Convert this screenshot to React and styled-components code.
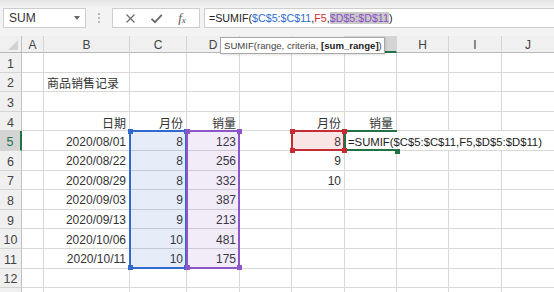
import React from 'react';
import styled, { createGlobalStyle } from 'styled-components';

const COLS = [22, 22, 86, 57, 53, 52, 53, 52, 52, 53, 53];
const LETTERS = ['', 'A', 'B', 'C', 'D', 'E', 'F', 'G', 'H', 'I', 'J'];
const HIDDEN_HEADERS = ['E', 'F', 'G'];
const HEADER_H = 17;
const ROW_H = 19.6;
const ROW_COUNT = 13;

const colLeft = (i) => COLS.slice(0, i).reduce((a, b) => a + b, 0);
const colIdx = (letter) => LETTERS.indexOf(letter);
const rowTop = (r) => HEADER_H + (r - 1) * ROW_H;

const DATA = {
  2: { B: { v: '商品销售记录', a: 'left' } },
  4: { B: { v: '日期' }, C: { v: '月份' }, D: { v: '销量' }, F: { v: '月份' }, G: { v: '销量' } },
  5: { B: { v: '2020/08/01' }, C: { v: '8' }, D: { v: '123' }, F: { v: '8' } },
  6: { B: { v: '2020/08/22' }, C: { v: '8' }, D: { v: '256' }, F: { v: '9' } },
  7: { B: { v: '2020/08/29' }, C: { v: '8' }, D: { v: '332' }, F: { v: '10' } },
  8: { B: { v: '2020/09/03' }, C: { v: '9' }, D: { v: '387' } },
  9: { B: { v: '2020/09/13' }, C: { v: '9' }, D: { v: '213' } },
  10: { B: { v: '2020/10/06' }, C: { v: '10' }, D: { v: '481' } },
  11: { B: { v: '2020/10/11' }, C: { v: '10' }, D: { v: '175' } },
};

const GlobalStyle = createGlobalStyle`
  html, body { margin: 0; padding: 0; background: #ffffff; overflow: hidden; }
  body { font-family: "Liberation Sans", "Noto Sans CJK SC", sans-serif; }
  * { box-sizing: border-box; }
`;

const Page = styled.div`
  width: 554px;
  height: 292px;
  overflow: hidden;
  display: flex;
  flex-direction: column;
`;

/* ---------- Formula toolbar ---------- */
const Toolbar = styled.div`
  height: 36px;
  flex: 0 0 36px;
  display: flex;
  align-items: center;
  padding: 0 0 0 3px;
  background: linear-gradient(#e4e4e4 0px, #ececec 4px, #f3f3f3 8px, #f3f3f3 100%);
`;

const NameBox = styled.div`
  width: 83px;
  height: 20px;
  background: #fff;
  border: 1px solid #cdcdcd;
  display: flex;
  align-items: center;
  justify-content: space-between;
  padding: 0 5px 0 5px;
  font-size: 12px;
  color: #333;
`;

const DropArrow = styled.span`
  width: 0;
  height: 0;
  border-left: 3.5px solid transparent;
  border-right: 3.5px solid transparent;
  border-top: 4px solid #666;
`;

const Grip = styled.div`
  width: 26px;
  display: flex;
  flex-direction: column;
  align-items: center;
  gap: 2px;
  span {
    width: 2px;
    height: 2px;
    background: #b8b8b8;
  }
`;

const ButtonGroup = styled.div`
  width: 88px;
  height: 20px;
  background: #fff;
  border: 1px solid #cdcdcd;
  display: flex;
  align-items: center;
  justify-content: space-around;
  padding: 0 4px;
`;

const IconBtn = styled.span`
  width: 22px;
  display: flex;
  align-items: center;
  justify-content: center;
  color: #6a6a6a;
`;

const Fx = styled.span`
  font-family: "Liberation Serif", serif;
  font-style: italic;
  font-size: 13px;
  color: #555;
  sub {
    font-size: 9px;
    vertical-align: -1px;
  }
`;

const FormulaInput = styled.div`
  margin-left: 4px;
  flex: 1;
  height: 20px;
  background: #fff;
  border: 1px solid #cdcdcd;
  border-right: none;
  display: flex;
  align-items: center;
  padding-left: 4px;
  font-size: 10.7px;
  color: #222;
  white-space: nowrap;
`;

const Ref = styled.span`
  color: ${(p) => p.$color};
  background: ${(p) => (p.$sel ? '#c9c9c9' : 'transparent')};
`;

/* ---------- Sheet ---------- */
const Sheet = styled.div`
  position: relative;
  flex: 1;
  overflow: hidden;
`;

const Grid = styled.div`
  display: grid;
  grid-template-columns: ${COLS.map((c) => c + 'px').join(' ')};
  grid-template-rows: ${HEADER_H}px repeat(${ROW_COUNT}, ${ROW_H}px);
  width: max-content;
`;

const Corner = styled.div`
  background: #f0f0f0;
  border-right: 1px solid #c0c0c0;
  border-bottom: 1px solid #b8b8b8;
  position: relative;
  &::after {
    content: '';
    position: absolute;
    right: 3px;
    bottom: 2px;
    width: 0;
    height: 0;
    border-left: 10px solid transparent;
    border-bottom: 10px solid #d2d2d2;
  }
`;

const ColHeader = styled.div`
  background: ${(p) => (p.$active ? '#d4d4d4' : '#f0f0f0')};
  border-right: 1px solid #d4d4d4;
  border-bottom: ${(p) => (p.$active ? '2px solid #217346' : '1px solid #b8b8b8')};
  display: flex;
  align-items: center;
  justify-content: center;
  font-size: 12px;
  color: ${(p) => (p.$active ? '#217346' : '#444')};
  padding-top: 1px;
`;

const RowHeader = styled.div`
  background: ${(p) => (p.$active ? '#d4d4d4' : '#f0f0f0')};
  border-right: ${(p) => (p.$active ? '2px solid #217346' : '1px solid #c0c0c0')};
  border-bottom: 1px solid #d4d4d4;
  display: flex;
  align-items: center;
  justify-content: center;
  font-size: 12.5px;
  color: ${(p) => (p.$active ? '#217346' : '#444')};
  padding-top: 3px;
`;

const Cell = styled.div`
  border-right: 1px solid #d8d8d8;
  border-bottom: 1px solid #d8d8d8;
  display: flex;
  align-items: center;
  justify-content: ${(p) => (p.$align === 'left' ? 'flex-start' : 'flex-end')};
  padding: 2px 3px 0 3px;
  font-size: 12px;
  color: #333;
  white-space: nowrap;
  overflow: visible;
`;

const Range = styled.div.attrs((p) => ({
  style: { left: p.$x, top: p.$y, width: p.$w, height: p.$h },
}))`
  position: absolute;
  border: 2px solid ${(p) => p.$color};
  background: ${(p) => p.$fill};
  pointer-events: none;
`;

const Handle = styled.div.attrs((p) => ({
  style: { left: p.$x - 2.5, top: p.$y - 2.5 },
}))`
  position: absolute;
  width: 5px;
  height: 5px;
  background: ${(p) => p.$color};
  z-index: 3;
`;

const EditCell = styled.div.attrs((p) => ({
  style: { left: p.$x, top: p.$y, height: p.$h },
}))`
  position: absolute;
  right: 0;
  background: #fff;
  display: flex;
  align-items: center;
  padding: 2px 0 0 3px;
  font-size: 11.3px;
  color: #222;
  white-space: nowrap;
  z-index: 2;
`;

const ActiveBorder = styled.div.attrs((p) => ({
  style: { left: p.$x, top: p.$y, width: p.$w, height: p.$h },
}))`
  position: absolute;
  border-top: 2px solid #217346;
  border-bottom: 2px solid #217346;
  border-left: 2px solid #217346;
  z-index: 2;
`;

const Tooltip = styled.div`
  position: absolute;
  left: 220px;
  top: 1px;
  height: 17px;
  width: 165px;
  background: #fff;
  border: 1px solid #a8a8a8;
  box-shadow: 1px 1px 2px rgba(0, 0, 0, 0.12);
  display: flex;
  align-items: center;
  padding-left: 3px;
  font-size: 9.6px;
  color: #444;
  white-space: nowrap;
  overflow: hidden;
  z-index: 5;
  b { color: #222; }
`;

function RangeBox({ col, r1, r2, color, fill }) {
  const i = colIdx(col);
  const x = colLeft(i) - 1;
  const y = rowTop(r1) - 1;
  const w = COLS[i] + 1;
  const h = (r2 - r1 + 1) * ROW_H + 1;
  const xs = [x + 1, x + w - 1];
  const ys = [y + 1, y + h - 1];
  return (
    <>
      <Range $x={x} $y={y} $w={w} $h={h} $color={color} $fill={fill} />
      {xs.map((hx) => ys.map((hy) => <Handle key={`${hx}-${hy}`} $x={hx} $y={hy} $color={color} />))}
    </>
  );
}

const XIcon = () => (
  <svg width="11" height="11" viewBox="0 0 11 11">
    <path d="M1.5 1.5 L9.5 9.5 M9.5 1.5 L1.5 9.5" stroke="#6a6a6a" strokeWidth="1.2" fill="none" />
  </svg>
);

const CheckIcon = () => (
  <svg width="13" height="11" viewBox="0 0 13 11">
    <path d="M1.5 5.8 L5 9.2 L11.8 1.8" stroke="#6a6a6a" strokeWidth="1.8" fill="none" />
  </svg>
);

export default function App() {
  const gIdx = colIdx('G');
  const gx = colLeft(gIdx);
  const r5 = rowTop(5);

  const cells = [];
  LETTERS.forEach((l, i) => {
    if (i === 0) cells.push(<Corner key="corner" />);
    else
      cells.push(
        <ColHeader key={`h${l}`} $active={l === 'G'}>
          {HIDDEN_HEADERS.includes(l) ? null : l}
        </ColHeader>
      );
  });
  for (let r = 1; r <= ROW_COUNT; r++) {
    LETTERS.forEach((l, i) => {
      if (i === 0) {
        cells.push(
          <RowHeader key={`r${r}`} $active={r === 5}>
            {r < ROW_COUNT ? r : null}
          </RowHeader>
        );
      } else {
        const d = DATA[r] && DATA[r][l];
        cells.push(
          <Cell key={`${l}${r}`} $align={d && d.a}>
            {d ? d.v : null}
          </Cell>
        );
      }
    });
  }

  return (
    <Page>
      <GlobalStyle />
      <Toolbar>
        <NameBox>
          <span>SUM</span>
          <DropArrow />
        </NameBox>
        <Grip>
          <span />
          <span />
          <span />
        </Grip>
        <ButtonGroup>
          <IconBtn><XIcon /></IconBtn>
          <IconBtn><CheckIcon /></IconBtn>
          <IconBtn><Fx>f<sub>x</sub></Fx></IconBtn>
        </ButtonGroup>
        <FormulaInput>
          <span>=SUMIF(</span>
          <Ref $color="#2f6bd0">$C$5:$C$11</Ref>
          <span>,</span>
          <Ref $color="#d0302f">F5</Ref>
          <span>,</span>
          <Ref $color="#8a4fc4" $sel>$D$5:$D$11</Ref>
          <span>)</span>
        </FormulaInput>
      </Toolbar>
      <Sheet>
        <Grid>{cells}</Grid>
        <RangeBox col="C" r1={5} r2={11} color="#3169cc" fill="rgba(49,105,204,0.12)" />
        <RangeBox col="D" r1={5} r2={11} color="#8c55c8" fill="rgba(140,85,200,0.11)" />
        <RangeBox col="F" r1={5} r2={5} color="#c62a33" fill="rgba(210,40,50,0.12)" />
        <EditCell $x={gx} $y={r5} $h={ROW_H - 1}>=SUMIF($C$5:$C$11,F5,$D$5:$D$11)</EditCell>
        <ActiveBorder $x={gx - 1} $y={r5 - 1} $w={COLS[gIdx] + 1} $h={ROW_H + 1} />
        <Handle $x={gx + COLS[gIdx]} $y={r5 + ROW_H} $color="#217346" />
        <Tooltip>
          SUMIF(range, criteria,&nbsp;<b>[sum_range]</b>)
        </Tooltip>
      </Sheet>
    </Page>
  );
}
